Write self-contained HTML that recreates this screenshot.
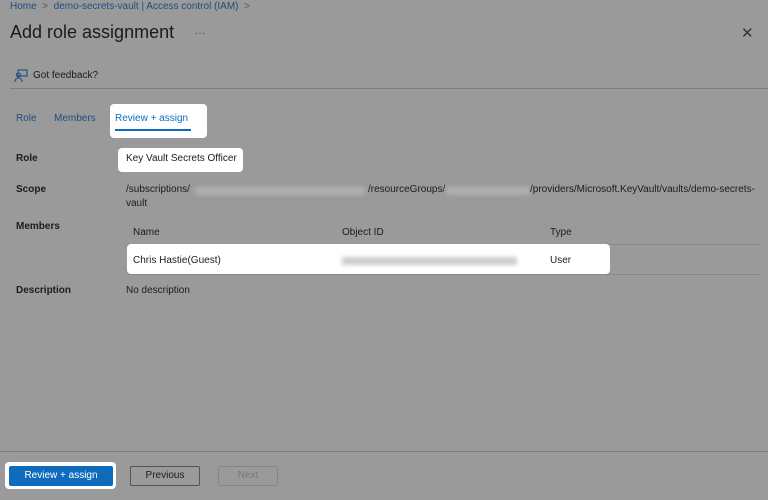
<!DOCTYPE html>
<html><head><style>
body{margin:0;width:768px;height:500px;background:#9a9a9a;font-family:"Liberation Sans",sans-serif;position:relative;overflow:hidden;color:#1c1c1c}
.a{position:absolute;white-space:nowrap}
.lk{color:#1d4c80}
.w{position:absolute;background:#fff;border-radius:4px}
.bl{position:absolute;background:#b0b0b0;filter:blur(2px);height:8px}
</style></head><body>
<div class="a lk" style="left:10px;top:1px;font-size:10px">Home <span style="color:#555">&nbsp;&gt;&nbsp;</span> demo-secrets-vault | Access control (IAM) <span style="color:#555">&nbsp;&gt;</span></div>
<div class="a" style="left:10px;top:22px;font-size:18px;color:#1a1a1a">Add role assignment</div>
<div class="a" style="left:195px;top:28px;font-size:10px;color:#444">···</div>
<div class="a" style="left:741px;top:24px;font-size:15px;color:#333">✕</div>
<svg class="a" style="left:14px;top:69px" width="14" height="14" viewBox="0 0 14 14" fill="none" stroke="#1d4c80" stroke-width="1.1"><rect x="4" y="1" width="9" height="6"/><circle cx="4.5" cy="6" r="2"/><path d="M1 13c0-3 2-4 3.5-4s3.5 1 3.5 4"/></svg>
<div class="a" style="left:33px;top:70px;font-size:10px">Got feedback?</div>
<div class="a" style="left:10px;top:88px;width:758px;height:1px;background:#7e7e7e"></div>
<div class="a lk" style="left:16px;top:113px;font-size:10px">Role</div>
<div class="a lk" style="left:54px;top:113px;font-size:10px">Members</div>
<div class="w" style="left:110px;top:104px;width:97px;height:34px"></div>
<div class="a" style="left:115px;top:113px;font-size:10px;color:#0f6cbd">Review + assign</div>
<div class="a" style="left:115px;top:129px;width:76px;height:2px;background:#0f6cbd"></div>
<div class="a" style="left:16px;top:153px;font-size:10px;font-weight:bold">Role</div>
<div class="w" style="left:118px;top:148px;width:125px;height:24px"></div>
<div class="a" style="left:126px;top:153px;font-size:10px">Key Vault Secrets Officer</div>
<div class="a" style="left:16px;top:184px;font-size:10px;font-weight:bold">Scope</div>
<div class="a" style="left:126px;top:184px;font-size:10px">/subscriptions/</div>
<div class="bl" style="left:195px;top:187px;width:170px"></div>
<div class="a" style="left:368px;top:184px;font-size:10px">/resourceGroups/</div>
<div class="bl" style="left:446px;top:187px;width:84px"></div>
<div class="a" style="left:530px;top:184px;font-size:10px">/providers/Microsoft.KeyVault/vaults/demo-secrets-</div>
<div class="a" style="left:126px;top:198px;font-size:10px">vault</div>
<div class="a" style="left:16px;top:221px;font-size:10px;font-weight:bold">Members</div>
<div class="a" style="left:133px;top:227px;font-size:10px">Name</div>
<div class="a" style="left:342px;top:227px;font-size:10px">Object ID</div>
<div class="a" style="left:550px;top:227px;font-size:10px">Type</div>
<div class="a" style="left:127px;top:244px;width:633px;height:1px;background:#888"></div>
<div class="a" style="left:127px;top:274px;width:633px;height:1px;background:#888"></div>
<div class="w" style="left:127px;top:244px;width:483px;height:30px"></div>
<div class="a" style="left:133px;top:255px;font-size:10px">Chris Hastie(Guest)</div>
<div class="bl" style="left:342px;top:257px;width:175px;background:#ccc"></div>
<div class="a" style="left:550px;top:255px;font-size:10px">User</div>
<div class="a" style="left:16px;top:285px;font-size:10px;font-weight:bold">Description</div>
<div class="a" style="left:126px;top:285px;font-size:10px">No description</div>
<div class="a" style="left:0;top:451px;width:768px;height:1px;background:#7e7e7e"></div>
<div class="w" style="left:5px;top:462px;width:111px;height:27px"></div>
<div class="a" style="left:9px;top:466px;width:104px;height:20px;background:#0f6cbd;color:#fff;font-size:10px;text-align:center;line-height:20px;border-radius:2px">Review + assign</div>
<div class="a" style="left:130px;top:466px;width:68px;height:18px;border:1px solid #555;font-size:10px;text-align:center;line-height:18px;border-radius:2px">Previous</div>
<div class="a" style="left:218px;top:466px;width:58px;height:18px;border:1px solid #858585;color:#777;font-size:10px;text-align:center;line-height:18px;border-radius:2px">Next</div>
</body></html>
